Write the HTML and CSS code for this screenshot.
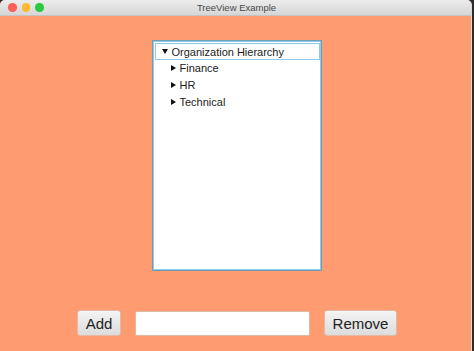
FILE: index.html
```html
<!DOCTYPE html>
<html lang="en">
<head>
    <meta charset="UTF-8">
    <title>TreeView Example</title>
    <link rel="stylesheet" href="styles.css">
</head>
<body>
<div class="window">
    <div class="titlebar">
        <div class="lights">
            <span class="light red"></span>
            <span class="light yellow"></span>
            <span class="light green"></span>
        </div>
        <div class="title">TreeView Example</div>
    </div>
    <div class="content">
        <div class="tree">
            <div class="row root focused"><span class="arrow down"></span>Organization Hierarchy</div>
            <div class="row child"><span class="arrow right"></span>Finance</div>
            <div class="row child"><span class="arrow right"></span>HR</div>
            <div class="row child"><span class="arrow right"></span>Technical</div>
        </div>
        <div class="controls">
            <button class="btn add">Add</button>
            <input class="field" type="text">
            <button class="btn remove">Remove</button>
        </div>
    </div>
</div>
</body>
</html>
```

FILE: styles.css
```css
html, body {
    margin: 0;
    padding: 0;
}
body {
    font-family: "Liberation Sans", Arial, sans-serif;
    background: #2b2b2b;
    width: 474px;
    height: 351px;
    overflow: hidden;
}
.window {
    width: 471px;
    height: 351px;
    background: #fe9b70;
    border-radius: 5px 5px 0 0;
    overflow: hidden;
    display: flex;
    flex-direction: column;
    border-right: 1px solid #d8d8d8;
}
.titlebar {
    height: 15px;
    background: linear-gradient(#ececec, #d6d6d6);
    border-bottom: 1px solid #c4c4c4;
    position: relative;
    display: flex;
    align-items: center;
    justify-content: center;
}
.lights {
    position: absolute;
    left: 8px;
    top: 3px;
    display: flex;
    gap: 5px;
}
.light {
    width: 8.5px;
    height: 8.5px;
    border-radius: 50%;
}
.red { background: #fc5f57; }
.yellow { background: #fdbc2e; }
.green { background: #29c840; }
.title {
    font-size: 9.5px;
    color: #4a4a4a;
    margin-left: 2px;
}
.content {
    flex: 1;
    display: flex;
    flex-direction: column;
    align-items: center;
}
.tree {
    margin-top: 24px;
    margin-left: 2px;
    width: 166px;
    height: 227px;
    background: #fff;
    border: 1px solid #6f9fb8;
    box-shadow: inset 0 0 0 1px #8fcbe8;
    padding: 1px;
    font-size: 11px;
    color: #222;
}
.row {
    height: 17px;
    display: flex;
    align-items: center;
    box-sizing: border-box;
}
.root {
    padding-left: 7px;
}
.focused {
    outline: 1px solid #8ccbea;
    outline-offset: -1px;
    margin: 1px 0 0 1px;
    height: 17px;
}
.focused + .row {
    margin-top: -1px;
}
.child {
    padding-left: 17px;
}
.arrow {
    width: 0;
    height: 0;
    margin-right: 4px;
}
.arrow.down {
    border-left: 3.5px solid transparent;
    border-right: 3.5px solid transparent;
    border-top: 5px solid #111;
}
.arrow.right {
    border-top: 3.5px solid transparent;
    border-bottom: 3.5px solid transparent;
    border-left: 5px solid #111;
    margin-right: 4px;
}
.controls {
    margin-top: 39px;
    margin-left: 3px;
    display: flex;
    gap: 14px;
    align-items: center;
}
.btn {
    font-family: "Liberation Sans", Arial, sans-serif;
    font-size: 15px;
    color: #222;
    height: 26px;
    padding: 0;
    border: 1px solid #e4b9a4;
    border-radius: 3px;
    background: linear-gradient(#f4f4f4, #dcdcdc);
}
.add {
    width: 44px;
}
.remove {
    width: 73px;
}
.field {
    width: 175px;
    height: 25px;
    box-sizing: border-box;
    border: 1px solid #e0b8a4;
    border-radius: 2px;
    background: #fff;
    margin: 0;
}
```
